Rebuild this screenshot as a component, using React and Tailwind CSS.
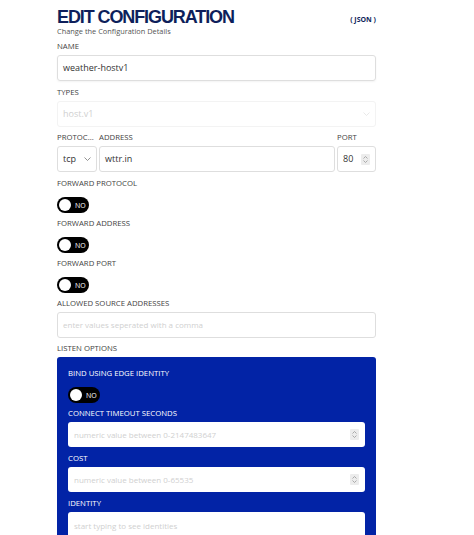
import React from 'react';

function Toggle() {
  return (
    <div className="flex shrink-0 items-center w-[32px] h-[16px] rounded-full bg-black pl-[2px] gap-[4px]">
      <span className="w-[12px] h-[12px] rounded-full bg-white" />
      <span className="text-[7px] text-white leading-none">NO</span>
    </div>
  );
}

function Label({ children, light }) {
  return (
    <div className={`text-[7.75px] leading-[8px] uppercase ${light ? 'text-white' : 'text-[#444]'}`}>{children}</div>
  );
}

function Spinner() {
  return (
    <span className="flex flex-col items-center justify-center w-[9px] h-[11px] bg-[#ececec] rounded-[1px]">
      <svg width="5" height="3" viewBox="0 0 5 3"><path d="M0.5 2.5 L2.5 0.5 L4.5 2.5" stroke="#999" fill="none" strokeWidth="0.8" /></svg>
      <svg width="5" height="3" viewBox="0 0 5 3" className="mt-[1px]"><path d="M0.5 0.5 L2.5 2.5 L4.5 0.5" stroke="#999" fill="none" strokeWidth="0.8" /></svg>
    </span>
  );
}

export default function App() {
  return (
    <div className="w-[474px] h-[535px] overflow-hidden bg-white" style={{ fontFamily: '"Open Sans", sans-serif' }}>
      <div className="ml-[57px] w-[319px] pt-[8px]">
        {/* Header */}
        <div className="flex justify-between items-end">
          <h1 className="text-[18px] leading-[18px] text-[#0e1f5b] tracking-[-1.1px]" style={{ fontFamily: '"Liberation Sans", sans-serif', fontWeight: 900 }}>EDIT CONFIGURATION</h1>
          <span className="text-[7px] font-bold text-[#0e1f5b] mb-[1px]">( JSON )</span>
        </div>
        <p className="text-[7.4px] leading-[8px] text-[#555] mt-[1px]">Change the Configuration Details</p>

        <div className="mt-[7px]"><Label>Name</Label></div>
        <div className="mt-[5px] h-[26px] border border-[#dedede] rounded-[3px] flex items-center px-[5px] text-[9px] text-[#333] shadow-[0_1px_2px_rgba(0,0,0,0.05)]">weather-hostv1</div>

        <div className="mt-[7px]"><Label>Types</Label></div>
        <div className="mt-[5px] h-[26px] border border-[#f3f3f3] rounded-[3px] flex items-center justify-between px-[5px] text-[9px] text-[#d0d0d0]">
          <span>host.v1</span>
          <svg width="7" height="4" viewBox="0 0 7 4"><path d="M0.5 0.5 L3.5 3.5 L6.5 0.5" stroke="#e3e3e3" fill="none" strokeWidth="0.8" /></svg>
        </div>

        <div className="mt-[6px] flex gap-[2px]">
          <div className="w-[40px]">
            <Label>Protoc...</Label>
            <div className="mt-[5px] h-[26px] border border-[#dedede] rounded-[3px] flex items-center justify-between px-[5px] text-[9px] text-[#333]">
              <span>tcp</span>
              <svg width="7" height="4" viewBox="0 0 7 4"><path d="M0.5 0.5 L3.5 3.5 L6.5 0.5" stroke="#777" fill="none" strokeWidth="0.8" /></svg>
            </div>
          </div>
          <div className="flex-1">
            <Label>Address</Label>
            <div className="mt-[5px] h-[26px] border border-[#dedede] rounded-[3px] flex items-center px-[5px] text-[9px] text-[#333]">wttr.in</div>
          </div>
          <div className="w-[39px]">
            <Label>Port</Label>
            <div className="mt-[5px] h-[26px] border border-[#dedede] rounded-[3px] flex items-center justify-between px-[5px] text-[9px] text-[#333]">
              <span>80</span>
              <Spinner />
            </div>
          </div>
        </div>

        <div className="mt-[7px]"><Label>Forward Protocol</Label></div>
        <div className="mt-[10px]"><Toggle /></div>
        <div className="mt-[6px]"><Label>Forward Address</Label></div>
        <div className="mt-[10px]"><Toggle /></div>
        <div className="mt-[6px]"><Label>Forward Port</Label></div>
        <div className="mt-[10px]"><Toggle /></div>

        <div className="mt-[6px]"><Label>Allowed Source Addresses</Label></div>
        <div className="mt-[5px] h-[26px] border border-[#dedede] rounded-[3px] flex items-center px-[5px] text-[8px] text-[#d0d0d0]">enter values seperated with a comma</div>

        <div className="mt-[6px]"><Label>Listen Options</Label></div>
        <div className="mt-[5px] bg-[#0223a6] rounded-[3px] px-[11px] pt-[12px] pb-[20px]">
          <Label light>Bind using edge identity</Label>
          <div className="mt-[10px]"><Toggle /></div>
          <div className="mt-[6px]"><Label light>Connect timeout seconds</Label></div>
          <div className="mt-[5px] h-[25px] bg-white rounded-[3px] flex items-center justify-between px-[6px] text-[8px] text-[#d0d0d0]">
            <span>numeric value between 0-2147483647</span>
            <Spinner />
          </div>
          <div className="mt-[7px]"><Label light>Cost</Label></div>
          <div className="mt-[5px] h-[25px] bg-white rounded-[3px] flex items-center justify-between px-[6px] text-[8px] text-[#d0d0d0]">
            <span>numeric value between 0-65535</span>
            <Spinner />
          </div>
          <div className="mt-[7px]"><Label light>Identity</Label></div>
          <div className="mt-[5px] h-[25px] bg-white rounded-[3px] flex items-center px-[6px] pt-[2px] text-[8px] text-[#d0d0d0]">start typing to see identities</div>
        </div>
      </div>
    </div>
  );
}
